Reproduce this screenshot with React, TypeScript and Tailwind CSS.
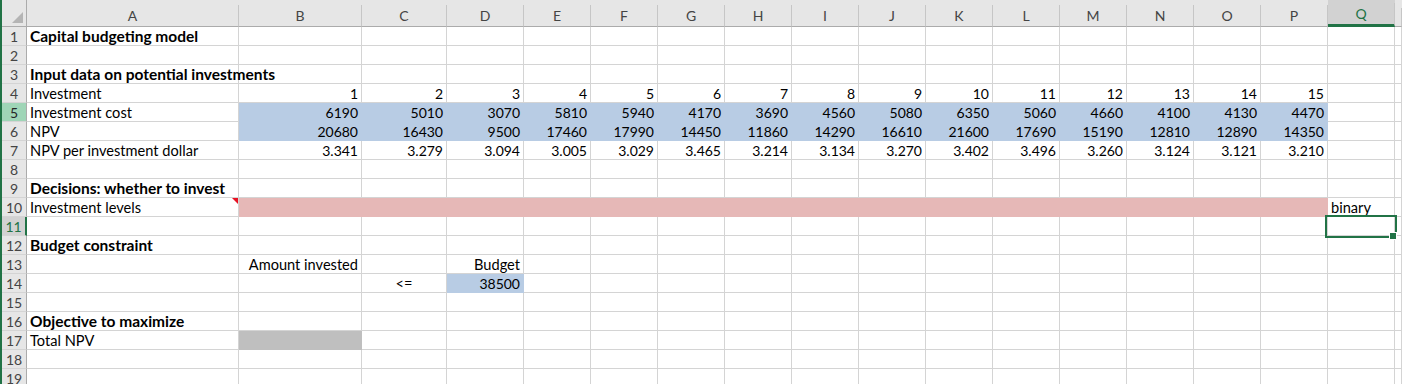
import React from 'react';

type Cell = { t?: string; a?: 'l' | 'r' | 'c'; b?: boolean; f?: 'blue' | 'pink' | 'gray'; note?: boolean };

const LETTERS = ['A', 'B', 'C', 'D', 'E', 'F', 'G', 'H', 'I', 'J', 'K', 'L', 'M', 'N', 'O', 'P', 'Q', 'R'];
const RANGE = LETTERS.slice(1, 16); // B..P

const ids = Array.from({ length: 15 }, (_, i) => String(i + 1));
const cost = ['6190', '5010', '3070', '5810', '5940', '4170', '3690', '4560', '5080', '6350', '5060', '4660', '4100', '4130', '4470'];
const npv = ['20680', '16430', '9500', '17460', '17990', '14450', '11860', '14290', '16610', '21600', '17690', '15190', '12810', '12890', '14350'];
const ratio = ['3.341', '3.279', '3.094', '3.005', '3.029', '3.465', '3.214', '3.134', '3.270', '3.402', '3.496', '3.260', '3.124', '3.121', '3.210'];

const spread = (vals: string[] | null, f?: Cell['f']) => {
  const r: Record<string, Cell> = {};
  RANGE.forEach((c, i) => {
    r[c] = { t: vals ? vals[i] : undefined, a: 'r', f };
  });
  return r;
};

const rows: Record<string, Cell>[] = [
  { A: { t: 'Capital budgeting model', b: true } },
  {},
  { A: { t: 'Input data on potential investments', b: true } },
  { A: { t: 'Investment' }, ...spread(ids) },
  { A: { t: 'Investment cost' }, ...spread(cost, 'blue') },
  { A: { t: 'NPV' }, ...spread(npv, 'blue') },
  { A: { t: 'NPV per investment dollar' }, ...spread(ratio) },
  {},
  { A: { t: 'Decisions: whether to invest', b: true } },
  { A: { t: 'Investment levels', note: true }, ...spread(null, 'pink'), Q: { t: 'binary' } },
  {},
  { A: { t: 'Budget constraint', b: true } },
  { B: { t: 'Amount invested', a: 'r' }, D: { t: 'Budget', a: 'r' } },
  { C: { t: '<=', a: 'c' }, D: { t: '38500', a: 'r', f: 'blue' } },
  {},
  { A: { t: 'Objective to maximize', b: true } },
  { A: { t: 'Total NPV' }, B: { f: 'gray' } },
  {},
  {},
];

const fills = {
  blue: 'bg-[#b8cce4] border-[#b8cce4]',
  pink: 'bg-[#e6b8b7] border-[#e6b8b7]',
  gray: 'bg-[#bfbfbf] border-[#bfbfbf]',
};

const align = { l: 'justify-start pl-[3px]', r: 'justify-end pr-[3px]', c: 'justify-center' };

function RowHeader({ n }: { n: number }) {
  if (n === 11) {
    return (
      <div className="flex items-center justify-center bg-[#d2d2d2] border-b border-[#d4d4d4] border-r-2 border-r-[#217346] text-[#217346] text-[14px]">
        {n}
      </div>
    );
  }
  if (n === 5) {
    return (
      <div className="flex items-center justify-center bg-[#9fd5b7] border-b border-r border-b-[#d4d4d4] border-r-[#ababab] text-[#262626] text-[14px]">
        {n}
      </div>
    );
  }
  return (
    <div className="flex items-center justify-center bg-[#e6e6e6] border-b border-r border-b-[#d4d4d4] border-r-[#ababab] text-[#444] text-[14px]">
      {n}
    </div>
  );
}

function ColHeader({ l }: { l: string }) {
  const active = l === 'Q';
  return (
    <div className={`flex flex-col ${active ? 'bg-[#d2d2d2]' : 'bg-[#e6e6e6]'}`}>
      <div className="h-[8px]" />
      <div
        className={`flex-1 flex items-center justify-center text-[14px] ${
          active
            ? 'text-[#217346] border-b-[3px] border-[#217346] border-r border-r-[#c6c6c6]'
            : 'text-[#444] border-b border-[#ababab] border-r border-r-[#c6c6c6]'
        }`}
      >
        {l === 'R' ? '' : l}
      </div>
    </div>
  );
}

function GridCell({ c, row, col }: { c?: Cell; row: number; col: string }) {
  const fill = c?.f ? fills[c.f] : 'border-[#d4d4d4]';
  const selected = row === 11 && col === 'Q';
  const numeric = !!c?.t && /^[0-9.]+$/.test(c.t);
  const size = c?.b ? 'text-[15.5px] font-bold' : numeric ? 'text-[14px]' : 'text-[14.6px]';
  return (
    <div
      className={`relative flex items-center whitespace-nowrap border-r border-b text-black leading-none pt-[2px] ${fill} ${
        align[c?.a ?? 'l']
      } ${size}`}
    >
      {c?.t}
      {c?.note && (
        <span className="absolute top-0 right-0 w-0 h-0 border-l-[6px] border-l-transparent border-t-[6px] border-t-[#e81123]" />
      )}
      {selected && (
        <div className="absolute -left-[3px] -top-[2px] w-[72px] h-[23px] border-2 border-[#217346] z-10">
          <div className="absolute left-[62px] top-[15px] w-[8px] h-[8px] bg-[#217346] border border-white" />
        </div>
      )}
    </div>
  );
}

export default function App() {
  return (
    <div className="w-[1402px] h-[384px] overflow-hidden bg-white border-l-2 border-[#217346] font-['Lato','Liberation_Sans',sans-serif]">
      <div className="grid grid-cols-[25px_212px_123px_85px_77px_repeat(13,67px)_1fr] grid-rows-[27px_repeat(19,19px)]">
        {/* corner */}
        <div className="flex items-end justify-end bg-[#e6e6e6] border-b border-r border-[#ababab] pr-[3px] pb-[3px]">
          <div className="w-0 h-0 border-l-[11px] border-l-transparent border-b-[11px] border-b-[#b4b4b4]" />
        </div>
        {LETTERS.map((l) => (
          <ColHeader key={l} l={l} />
        ))}

        {rows.map((r, i) => (
          <React.Fragment key={i}>
            <RowHeader n={i + 1} />
            {LETTERS.map((l) => (
              <GridCell key={l} c={r[l]} row={i + 1} col={l} />
            ))}
          </React.Fragment>
        ))}
      </div>
    </div>
  );
}
